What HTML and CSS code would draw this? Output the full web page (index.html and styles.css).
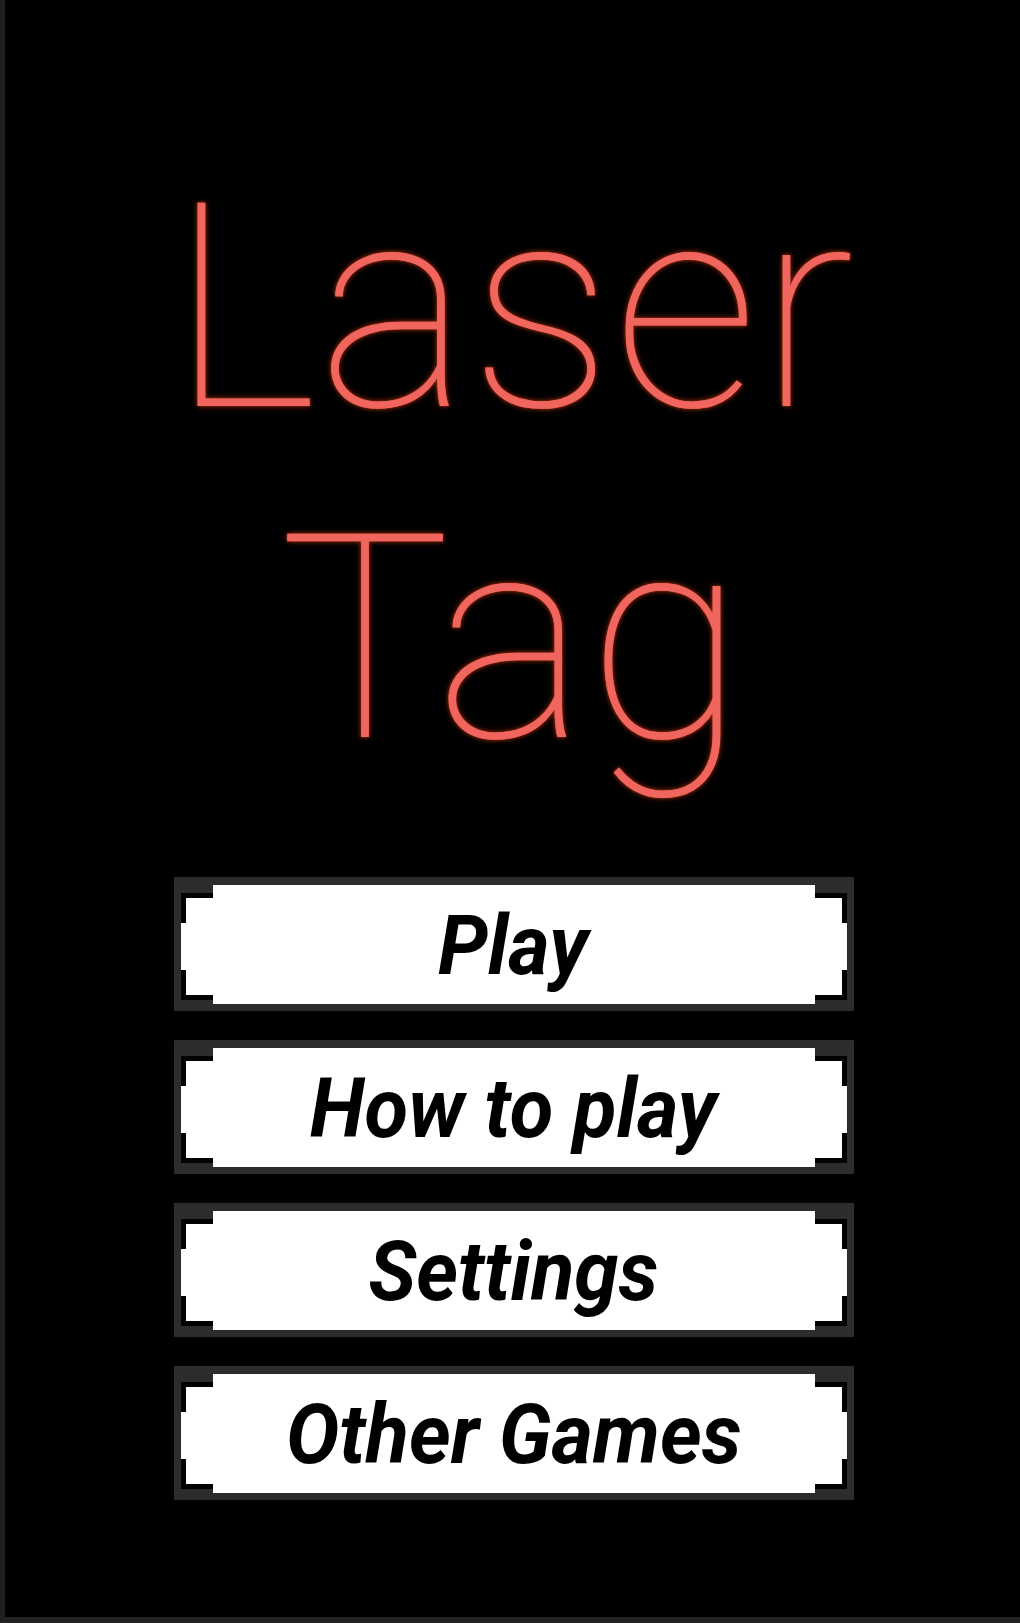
FILE: index.html
```html
<!DOCTYPE html>
<html lang="en">
<head>
<meta charset="utf-8">
<title>Laser Tag</title>
<link rel="stylesheet" href="styles.css">
</head>
<body>
<main class="screen">
  <h1 class="title"><span class="title-line">Laser</span><span class="title-line">Tag</span></h1>
  <nav class="menu">
    <button class="menu-btn"><span class="menu-face"><span class="menu-label">Play</span></span></button>
    <button class="menu-btn"><span class="menu-face"><span class="menu-label">How to play</span></span></button>
    <button class="menu-btn"><span class="menu-face"><span class="menu-label">Settings</span></span></button>
    <button class="menu-btn"><span class="menu-face"><span class="menu-label">Other Games</span></span></button>
  </nav>
</main>
</body>
</html>
```

FILE: styles.css
```css
html, body {
  margin: 0;
  padding: 0;
  background: #000;
}

.screen {
  box-sizing: border-box;
  width: 1020px;
  height: 1623px;
  background: #000;
  border-left: 5px solid #1f1f1f;
  border-bottom: 6px solid #222;
  display: flex;
  flex-direction: column;
  align-items: center;
  padding-top: 143px;
}

.title {
  margin: 0;
  display: flex;
  flex-direction: column;
  align-items: center;
  font-family: Roboto, "Liberation Sans", sans-serif;
  font-weight: 100;
  font-size: 286px;
  line-height: 331px;
  color: #f0665e;
  text-shadow: 0 0 1px #e0503e, 0 0 4px #8a2a0c, 0 0 7px #4a1400;
  letter-spacing: 1px;
}

.title-line {
  display: block;
}

.menu {
  margin-top: 72px;
  display: flex;
  flex-direction: column;
  gap: 29px;
  margin-left: 2px;
}

.menu-btn {
  display: block;
  box-sizing: border-box;
  width: 680px;
  height: 134px;
  padding: 8px 7px 7px 7px;
  margin: 0;
  border: 0;
  border-radius: 1px;
  background: #2c2c2c;
  box-shadow: 0 0 2px #111;
  cursor: pointer;
}

/* White face with dark corner brackets drawn as background layers */
.menu-face {
  display: flex;
  align-items: center;
  justify-content: center;
  width: 100%;
  height: 100%;
  background:
    /* top-left */
    linear-gradient(#2c2c2c, #2c2c2c) left 0 top 0 / 32px 8px no-repeat,
    linear-gradient(#000, #000) left 0 top 8px / 32px 5px no-repeat,
    linear-gradient(#000, #000) left 0 top 8px / 5px 30px no-repeat,
    /* top-right */
    linear-gradient(#2c2c2c, #2c2c2c) right 0 top 0 / 32px 8px no-repeat,
    linear-gradient(#000, #000) right 0 top 8px / 32px 5px no-repeat,
    linear-gradient(#000, #000) right 0 top 8px / 5px 30px no-repeat,
    /* bottom-left */
    linear-gradient(#2c2c2c, #2c2c2c) left 0 bottom 0 / 32px 4px no-repeat,
    linear-gradient(#000, #000) left 0 bottom 4px / 32px 5px no-repeat,
    linear-gradient(#000, #000) left 0 bottom 4px / 5px 30px no-repeat,
    /* bottom-right */
    linear-gradient(#2c2c2c, #2c2c2c) right 0 bottom 0 / 32px 4px no-repeat,
    linear-gradient(#000, #000) right 0 bottom 4px / 32px 5px no-repeat,
    linear-gradient(#000, #000) right 0 bottom 4px / 5px 30px no-repeat,
    #fff;
}

.menu-label {
  display: inline-block;
  font-family: Roboto, "Liberation Sans", sans-serif;
  font-weight: 700;
  font-style: italic;
  font-size: 84px;
  line-height: 1;
  color: #000;
  transform: scaleX(0.95);
  white-space: nowrap;
  margin-top: 2px;
}
```
